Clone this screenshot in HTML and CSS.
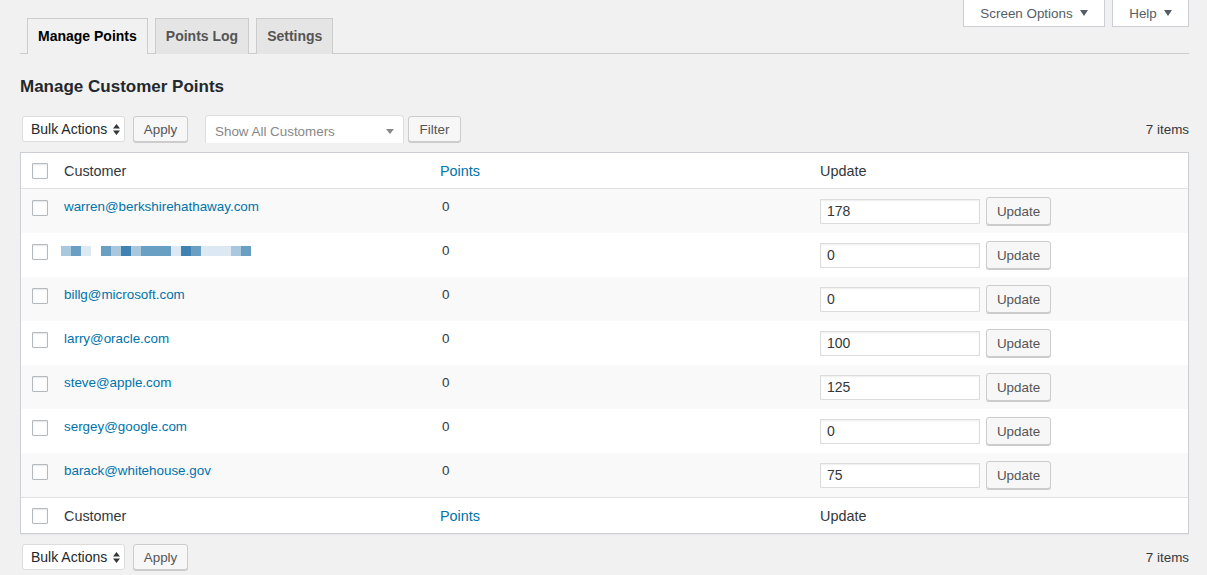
FILE: index.html
```html
<!DOCTYPE html>
<html>
<head>
<meta charset="utf-8">
<link rel="stylesheet" href="styles.css">
</head>
<body>
<div class="screen-meta">
  <button class="meta-btn meta-screen">Screen Options <svg class="caret" width="8" height="6" viewBox="0 0 8 6"><path d="M0 0H8L4 6Z"/></svg></button>
  <button class="meta-btn meta-help">Help <svg class="caret" width="8" height="6" viewBox="0 0 8 6"><path d="M0 0H8L4 6Z"/></svg></button>
</div>
<div class="wrap">
  <nav class="nav-tabs">
    <a class="tab active">Manage Points</a>
    <a class="tab">Points Log</a>
    <a class="tab">Settings</a>
  </nav>
  <h2 class="title">Manage Customer Points</h2>

  <div class="tablenav top">
    <div class="actions">
      <div class="bulk">Bulk Actions <svg class="updown" width="7" height="11" viewBox="0 0 7 11"><path d="M0 4.5H7L3.5 0Z M0 6.5H7L3.5 11Z"/></svg></div>
      <button class="btn btn-apply">Apply</button>
      <div class="select2">Show All Customers <svg class="s2arrow" width="8" height="5" viewBox="0 0 8 5"><path d="M0 0H8L4 5Z"/></svg></div>
      <button class="btn btn-filter">Filter</button>
    </div>
    <div class="count">7 items</div>
  </div>

  <table class="points">
    <thead>
      <tr>
        <th class="cb"><span class="check"></span></th>
        <th class="col-customer">Customer</th>
        <th class="col-points"><a class="link">Points</a></th>
        <th>Update</th>
      </tr>
    </thead>
    <tbody>
      <tr class="alt">
        <td class="cb"><span class="check"></span></td>
        <td><a class="link">warren@berkshirehathaway.com</a></td>
        <td class="num">0</td>
        <td><div class="upd"><span class="field">178</span><button class="btn btn-upd">Update</button></div></td>
      </tr>
      <tr>
        <td class="cb"><span class="check"></span></td>
        <td><div class="blur"><i class="b2"></i><i class="b3"></i><i class="b1"></i><i class="b0"></i><i class="b3"></i><i class="b2"></i><i class="b4"></i><i class="b2"></i><i class="b3"></i><i class="b3"></i><i class="b3"></i><i class="b1"></i><i class="b4"></i><i class="b3"></i><i class="b1"></i><i class="b1"></i><i class="b1"></i><i class="b2"></i><i class="b3"></i></div></td>
        <td class="num">0</td>
        <td><div class="upd"><span class="field">0</span><button class="btn btn-upd">Update</button></div></td>
      </tr>
      <tr class="alt">
        <td class="cb"><span class="check"></span></td>
        <td><a class="link">billg@microsoft.com</a></td>
        <td class="num">0</td>
        <td><div class="upd"><span class="field">0</span><button class="btn btn-upd">Update</button></div></td>
      </tr>
      <tr>
        <td class="cb"><span class="check"></span></td>
        <td><a class="link">larry@oracle.com</a></td>
        <td class="num">0</td>
        <td><div class="upd"><span class="field">100</span><button class="btn btn-upd">Update</button></div></td>
      </tr>
      <tr class="alt">
        <td class="cb"><span class="check"></span></td>
        <td><a class="link">steve@apple.com</a></td>
        <td class="num">0</td>
        <td><div class="upd"><span class="field">125</span><button class="btn btn-upd">Update</button></div></td>
      </tr>
      <tr>
        <td class="cb"><span class="check"></span></td>
        <td><a class="link">sergey@google.com</a></td>
        <td class="num">0</td>
        <td><div class="upd"><span class="field">0</span><button class="btn btn-upd">Update</button></div></td>
      </tr>
      <tr class="alt">
        <td class="cb"><span class="check"></span></td>
        <td><a class="link">barack@whitehouse.gov</a></td>
        <td class="num">0</td>
        <td><div class="upd"><span class="field">75</span><button class="btn btn-upd">Update</button></div></td>
      </tr>
    </tbody>
    <tfoot>
      <tr>
        <td class="cb"><span class="check"></span></td>
        <td>Customer</td>
        <td><a class="link">Points</a></td>
        <td>Update</td>
      </tr>
    </tfoot>
  </table>

  <div class="tablenav bottom">
    <div class="actions">
      <div class="bulk">Bulk Actions <svg class="updown" width="7" height="11" viewBox="0 0 7 11"><path d="M0 4.5H7L3.5 0Z M0 6.5H7L3.5 11Z"/></svg></div>
      <button class="btn btn-apply">Apply</button>
    </div>
    <div class="count">7 items</div>
  </div>
</div>
</body>
</html>
```

FILE: styles.css
```css
html, body {
  margin: 0;
  padding: 0;
}
body {
  background: #f1f1f1;
  font-family: "Liberation Sans", Arial, sans-serif;
  font-size: 13.4px;
  color: #32373c;
}
button {
  font-family: inherit;
}

/* screen meta links */
.screen-meta {
  display: flex;
  justify-content: flex-end;
  gap: 7px;
  margin-right: 18px;
  height: 27px;
}
.meta-btn {
  display: flex;
  align-items: center;
  justify-content: center;
  gap: 7px;
  height: 27px;
  background: #fff;
  border: 1px solid #ccd0d4;
  border-top: none;
  color: #555d66;
  font-size: 13.4px;
  padding: 0 16px;
  margin: 0;
}
.meta-screen { width: 142px; }
.meta-help { width: 77px; }
.caret { fill: #555d66; }

.wrap {
  margin: 0 18px 0 20px;
}

/* tabs */
.nav-tabs {
  display: flex;
  align-items: flex-end;
  gap: 7px;
  margin-top: -9px;
  padding-left: 7px;
  border-bottom: 1px solid #ccc;
}
.tab {
  display: block;
  background: #e5e5e5;
  border: 1px solid #ccc;
  border-bottom: none;
  padding: 5px 10px 6px 10px;
  font-size: 14px;
  line-height: 24px;
  font-weight: 700;
  color: #555;
  margin-bottom: -1px;
}
.tab.active {
  background: #f1f1f1;
  color: #000;
}

/* heading */
.title {
  margin: 22px 0 0 0;
  font-size: 17px;
  line-height: 22px;
  font-weight: 700;
  color: #23282d;
}

/* tablenav */
.tablenav {
  display: flex;
  justify-content: space-between;
  align-items: center;
  height: 28px;
}
.tablenav.top {
  margin-top: 17px;
}
.tablenav.bottom {
  margin-top: 9px;
}
.actions {
  display: flex;
  align-items: center;
}
.bulk {
  display: flex;
  align-items: center;
  justify-content: space-between;
  box-sizing: border-box;
  width: 103px;
  height: 26px;
  margin-left: 2px;
  padding: 0 4px 0 8px;
  background: #fff;
  border: 1px solid #ddd;
  border-radius: 3px;
  font-size: 14px;
  color: #23282d;
}
.updown { fill: #32373c; }
.btn {
  box-sizing: border-box;
  background: #f7f7f7;
  border: 1px solid #ccc;
  border-radius: 3px;
  box-shadow: 0 1px 0 #ccc;
  color: #555;
  font-size: 13.4px;
  padding: 0;
  margin: 0;
}
.btn-apply {
  width: 55px;
  height: 26px;
  margin-left: 8px;
}
.select2 {
  display: flex;
  align-items: center;
  justify-content: space-between;
  box-sizing: border-box;
  width: 199px;
  height: 28px;
  margin-left: 17px;
  padding: 3px 9px 0 9px;
  background: #fff;
  border: 1px solid #ddd;
  border-bottom: none;
  border-radius: 4px 4px 0 0;
  color: #888;
  font-size: 13.4px;
}
.s2arrow { fill: #888; }
.btn-filter {
  width: 53px;
  height: 26px;
  margin-left: 4px;
}
.count {
  font-size: 13.4px;
  color: #32373c;
}

/* table */
.points {
  width: 100%;
  margin-top: 9px;
  table-layout: fixed;
  border-collapse: separate;
  border-spacing: 0;
  background: #fff;
  border: 1px solid #ccd0d4;
  box-shadow: 0 1px 1px rgba(0, 0, 0, 0.04);
}
.points th, .points td {
  box-sizing: border-box;
  text-align: left;
  padding: 0 10px;
  font-weight: 400;
}
.points .col-customer { width: 376px; }
.points .col-points { width: 380px; }
.points thead th {
  height: 36px;
  font-size: 14.4px;
  vertical-align: middle;
  border-bottom: 1px solid #e1e1e1;
}
.points tfoot td {
  height: 36px;
  font-size: 14.4px;
  vertical-align: middle;
  border-top: 1px solid #e1e1e1;
}
.points tbody td {
  height: 44px;
  vertical-align: top;
  padding-top: 8px;
  line-height: 19px;
}
.points tbody tr.alt td {
  background: #f9f9f9;
}
.points .cb {
  width: 33px;
  padding: 0 0 0 11px;
}
.points tbody td.cb {
  padding-top: 11px;
}
.check {
  display: block;
  box-sizing: border-box;
  width: 16px;
  height: 16px;
  background: #fff;
  border: 1px solid #b4b9be;
  border-radius: 1px;
  box-shadow: inset 0 1px 2px rgba(0, 0, 0, 0.1);
}
.link {
  color: #0073aa;
  text-decoration: none;
}
.points td.num {
  padding-left: 12px;
}
.upd {
  display: flex;
  align-items: center;
  gap: 6px;
}
.field {
  display: block;
  box-sizing: border-box;
  width: 160px;
  height: 25px;
  padding: 0 6px;
  line-height: 23px;
  background: #fff;
  border: 1px solid #ddd;
  box-shadow: inset 0 1px 2px rgba(0, 0, 0, 0.07);
  font-size: 14px;
  color: #32373c;
}
.btn-upd {
  width: 65px;
  height: 28px;
}

/* blurred entry */
.blur {
  display: flex;
  height: 10px;
  margin: 5px 0 0 -3px;
}
.blur i {
  display: block;
  width: 10px;
  height: 10px;
}
.b0 { background: transparent; }
.b1 { background: #dde9f2; }
.b2 { background: #a9c8dd; }
.b3 { background: #6a9fc4; }
.b4 { background: #3f82b2; }
```
